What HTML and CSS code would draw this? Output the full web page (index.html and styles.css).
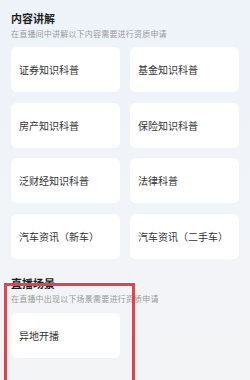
FILE: index.html
```html
<!DOCTYPE html>
<html lang="zh-CN">
<head>
  <meta charset="UTF-8">
  <meta name="viewport" content="width=device-width, initial-scale=1.0">
  <title>资质申请</title>
  <link rel="stylesheet" href="styles.css">
</head>
<body>
  <div class="page">
    <div class="section">
      <div class="section-title">内容讲解</div>
      <div class="section-desc">在直播间中讲解以下内容需要进行资质申请</div>
      <div class="cards">
        <div class="card">证券知识科普</div>
        <div class="card">基金知识科普</div>
        <div class="card">房产知识科普</div>
        <div class="card">保险知识科普</div>
        <div class="card">泛财经知识科普</div>
        <div class="card">法律科普</div>
        <div class="card">汽车资讯（新车）</div>
        <div class="card">汽车资讯（二手车）</div>
      </div>
    </div>

    <div class="section section-live">
      <div class="section-title">直播场景</div>
      <div class="section-desc">在直播中出现以下场景需要进行资质申请</div>
      <div class="cards">
        <div class="card">异地开播</div>
      </div>
    </div>

    <div class="highlight"></div>
  </div>
</body>
</html>
```

FILE: styles.css
```css
html, body {
  margin: 0;
  padding: 0;
}
body {
  font-family: "Noto Sans CJK SC", "Noto Sans", sans-serif;
  background: linear-gradient(to bottom, #eef3fa, #f3f4f6);
}
.page {
  position: relative;
  height: 380px;
  overflow: hidden;
  padding: 11px 11px 0;
  box-sizing: border-box;
}
.section-title {
  font-size: 11px;
  line-height: 14px;
  font-weight: 700;
  color: #1f1f1f;
}
.section-desc {
  margin-top: 4px;
  font-size: 8px;
  line-height: 10px;
  letter-spacing: 0.2px;
  color: #9a9a9a;
}
.cards {
  margin-top: 8px;
  display: grid;
  grid-template-columns: 1fr 1fr;
  column-gap: 10px;
  row-gap: 10.5px;
}
.card {
  height: 45px;
  display: flex;
  align-items: center;
  padding-left: 8px;
  background: #fff;
  border-radius: 6px;
  font-size: 10px;
  color: #333;
}
.section-live {
  margin-top: 17px;
}
.section-live .cards {
  margin-top: 9px;
}
.highlight {
  position: absolute;
  left: 4px;
  top: 283px;
  width: 125px;
  height: 120px;
  border: 3px solid #e5434c;
}
```
